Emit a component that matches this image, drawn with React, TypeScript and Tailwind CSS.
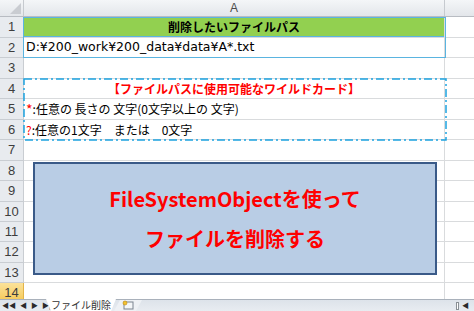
const rowHeights = [21, 20, 21, 20, 21, 20, 21, 20, 21, 20, 20, 21, 20, 20]

const grid = "border-[#d9dbdd]"

function Cell({ n }: { n: number }) {
  if (n === 1)
    return (
      <div className="flex h-full items-center justify-center bg-[#92d050] font-bold text-black border-b border-[#5ab4e0]">
        削除したいファイルパス
      </div>
    )
  if (n === 2)
    return (
      <div className="flex h-full items-center pl-[2px] [font-family:'DejaVu_Sans','Noto_Sans_CJK_JP',sans-serif] text-[12.5px]">
        D:¥200_work¥200_data¥data¥A*.txt
      </div>
    )
  if (n === 4)
    return (
      <div className="flex h-full items-center justify-center font-bold text-[#ff0000]">
        【ファイルパスに使用可能なワイルドカード】
      </div>
    )
  if (n === 5)
    return (
      <div className="flex h-full items-center pl-[2px]">
        <span className="text-[#ff0000] text-[14px]">*</span>:任意の 長さの 文字(0文字以上の 文字)
      </div>
    )
  if (n === 6)
    return (
      <div className="flex h-full items-center pl-[2px] whitespace-pre">
        <span className="text-[#ff0000]">?</span>:任意の1文字　または　0文字
      </div>
    )
  return null
}

export default function App() {
  return (
    <div className="w-[474px] h-[311px] overflow-hidden bg-white text-[12px] text-black [font-family:'Noto_Sans_CJK_JP',sans-serif]">
      {/* column header */}
      <div className="flex h-[17px] bg-gradient-to-b from-[#f4f6f8] to-[#e3e6ea] border-b border-[#b8bcc2]">
        <div className="relative w-[24px] border-r border-[#c6cacf]">
          <svg className="absolute right-[2px] bottom-[2px]" width="11" height="11" viewBox="0 0 11 11">
            <path d="M11 0 L11 11 L0 11 Z" fill="#c9ccd1" />
          </svg>
        </div>
        <div className="flex w-[421px] items-center justify-center border-r border-[#c6cacf] text-[#4a4a4a] [font-family:'Liberation_Sans',sans-serif] text-[12px]">
          A
        </div>
        <div className="flex-1" />
      </div>

      {/* rows */}
      <div className="relative h-[282px] overflow-hidden">
        {rowHeights.map((h, i) => {
          const n = i + 1
          const active = n === 14
          return (
            <div key={n} className="flex" style={{ height: h }}>
              <div
                className={`flex w-[24px] shrink-0 items-center justify-center border-r border-b text-[13px] text-[#3d3d3d] [font-family:'Liberation_Sans',sans-serif] ${
                  active
                    ? "bg-gradient-to-b from-[#fbe29a] to-[#f5c850] border-[#e3b448]"
                    : "bg-[#e8ebef] border-[#c9cdd2]"
                }`}
              >
                {n}
              </div>
              <div className={`w-[421px] shrink-0 border-r border-b ${grid}`}>
                <Cell n={n} />
              </div>
              <div className={`flex-1 border-b ${grid}`} />
            </div>
          )
        })}

        {/* selection box rows 1-2 */}
        <div className="absolute left-[23px] top-0 w-[423px] h-[41px] border border-[#5ab4e0]" />

        {/* dash-dot border rows 4-6 */}
        <svg className="absolute left-[23px] top-[61px]" width="424" height="63">
          <rect
            x="1"
            y="1"
            width="422"
            height="61"
            fill="none"
            stroke="#1ca3e0"
            strokeWidth="1.5"
            strokeDasharray="8 3 2 3"
          />
        </svg>

        {/* shape */}
        <div className="absolute left-[33px] top-[145px] w-[404px] h-[113px] bg-[#b9cde5] border-2 border-[#3a5a88] flex flex-col items-center justify-center text-[20px] leading-[40px] font-bold text-[#ff0000]">
          <div>FileSystemObjectを使って</div>
          <div>ファイルを削除する</div>
        </div>
      </div>

      {/* sheet tabs */}
      <div className="flex h-[12px] items-stretch bg-gradient-to-b from-[#dde3ea] to-[#e8ecf1] border-t border-[#a9b1bb] text-[#2a2a2a]">
        <div className="flex w-[46px] items-center gap-[4px] pl-[2px] text-[7px] leading-none">
          <span>◀◀</span>
          <span>◀</span>
          <span>▶</span>
          <span>▶|</span>
        </div>
        <div className="flex w-[70px] items-center justify-center whitespace-nowrap bg-white text-[10px] leading-none text-[#333] [clip-path:polygon(0_0,100%_0,calc(100%-5px)_100%,5px_100%)] -mt-px">
          ファイル削除
        </div>
        <div className="flex w-[28px] -ml-[2px] items-center justify-center bg-[#eef1f5] [clip-path:polygon(6px_0,100%_0,calc(100%-6px)_100%,0_100%)]">
          <svg width="14" height="11" viewBox="0 0 14 11">
            <rect x="3" y="2" width="9" height="7" fill="#f4f6f8" stroke="#7a8490" strokeWidth="1" />
            <circle cx="4" cy="3" r="2" fill="#f2c12e" stroke="#c08a10" strokeWidth="0.6" />
          </svg>
        </div>
        <div className="flex-1" />
        <div className="flex w-[18px] items-center gap-[3px] text-[7px] leading-none">
          <span className="w-[3px] h-[8px] border border-[#8a9096] bg-white" />
          <span>◀</span>
        </div>
      </div>
    </div>
  )
}
